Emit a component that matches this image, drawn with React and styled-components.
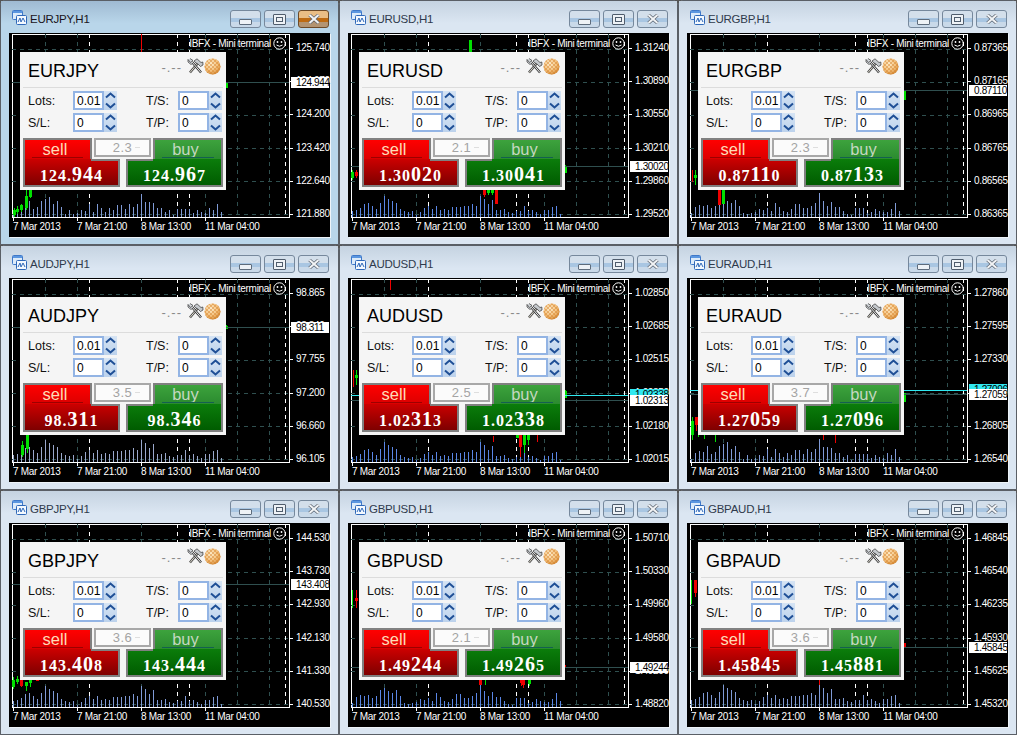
import React from 'react';
import styled, { createGlobalStyle } from 'styled-components';

const GlobalStyle = createGlobalStyle`
  html, body { margin: 0; padding: 0; background: #555; }
  body { font-family: "Liberation Sans", Arial, sans-serif; }
`;

const Desktop = styled.div`
  display: grid;
  grid-template-columns: repeat(3, 339px);
  grid-template-rows: repeat(3, 245px);
  width: 1017px;
  height: 735px;
  overflow: hidden;
`;

const Frame = styled.div`
  display: flex;
  flex-direction: column;
  box-sizing: border-box;
  border: 1px solid #5a5f66;
  border-radius: 5px 5px 0 0;
  padding: 0 8px 7px;
  background: ${p => (p.$active ? '#b9d6ea' : '#dbe6f2')};
`;

const TitleBar = styled.div`
  display: flex;
  align-items: flex-start;
  height: 32px;
  margin: 0 -8px;
  padding: 9px 9px 0 11px;
  box-sizing: border-box;
  background: ${p => (p.$active
    ? 'linear-gradient(#9fbad2, #b9d6ea 70%)'
    : 'linear-gradient(#c5d3e1, #dbe6f2 70%)')};
`;

const TitleText = styled.span`
  margin: 2px 0 0 3px;
  font-size: 11.5px;
  letter-spacing: -0.25px;
  line-height: 14px;
  color: ${p => (p.$active ? '#1a1420' : '#2f3a4c')};
`;

const Buttons = styled.div`
  display: flex;
  gap: 3px;
  margin-left: auto;
`;

const WinButton = styled.div`
  display: flex;
  align-items: center;
  justify-content: center;
  width: 31px;
  height: 18px;
  box-sizing: border-box;
  border: 1px solid #76889c;
  border-radius: 3px;
  background: linear-gradient(#d3dfeb 0 45%, #a9c6e2 45% 70%, #c9d9e9 70%);
`;

const CloseButton = styled(WinButton)`
  border-color: ${p => (p.$active ? '#6d4a28' : '#76889c')};
  background: ${p => (p.$active
    ? 'linear-gradient(#e9bd85 0 45%, #bd6a12 45% 70%, #b39472 70%)'
    : 'linear-gradient(#d3dfeb 0 45%, #a9c6e2 45% 70%, #c9d9e9 70%)')};
`;

const MinGlyph = styled.div`
  width: 11px;
  height: 4px;
  margin-top: 5px;
  border: 1px solid #5e6c7c;
  border-radius: 1px;
  background: #eef2f6;
`;

const MaxGlyph = styled.div`
  display: flex;
  align-items: center;
  justify-content: center;
  width: 11px;
  height: 9px;
  border: 1px solid #4f5c6c;
  border-radius: 1px;
  background: #eef2f6;
  &::after {
    content: '';
    width: 5px;
    height: 3px;
    border: 1px solid #4f5c6c;
  }
`;

const Chart = styled.div`
  flex: 1;
  display: grid;
  grid-template-columns: 278px minmax(0, 1fr);
  grid-template-rows: 184px minmax(0, 1fr);
  padding: 1px 0 0 3px;
  background: #000;
  box-shadow: 1px 1px 0 #eef4f9;
  min-height: 0;
`;

const Plot = styled.div`
  position: relative;
  box-sizing: border-box;
  border: 1px solid #fff;
`;

const PlotSvg = styled.svg`
  position: absolute;
  left: -1px;
  top: -1px;
  display: block;
`;

const Tagline = styled.div`
  position: absolute;
  top: 2px;
  right: 3px;
  display: flex;
  align-items: center;
  gap: 2px;
  font-size: 10px;
  letter-spacing: -0.3px;
  line-height: 12px;
  color: #fff;
`;

const Axis = styled.div`
  position: relative;
  grid-row: 1 / span 2;
  grid-column: 2;
  display: flex;
  flex-direction: column;
  justify-content: space-between;
  padding: 7px 0 16px;
  color: #fff;
  font-size: 10px;
  letter-spacing: -0.35px;
`;

const Tick = styled.div`
  position: relative;
  height: 14px;
  line-height: 14px;
  padding-left: 6px;
  &::before {
    content: '';
    position: absolute;
    left: 0;
    top: 7px;
    width: 3px;
    height: 1px;
    background: #fff;
  }
`;

const PriceTag = styled.div`
  position: absolute;
  left: 1px;
  right: 1px;
  top: ${p => p.$y - 34 - 5}px;
  height: 11px;
  line-height: 11px;
  padding-left: 5px;
  color: #000;
  background: ${p => p.$color};
`;

const TimeRow = styled.div`
  display: flex;
  color: #fff;
  font-size: 10px;
  letter-spacing: -0.3px;
`;

const TimeLabel = styled.div`
  position: relative;
  width: 64px;
  flex: none;
  white-space: nowrap;
  line-height: 14px;
  padding: 2px 0 0 1px;
  box-sizing: border-box;
  &::before {
    content: '';
    position: absolute;
    left: 1px;
    top: 0;
    width: 1px;
    height: 3px;
    background: #fff;
  }
`;

const Panel = styled.div`
  position: absolute;
  left: 7px;
  top: 17px;
  width: 206px;
  height: 138px;
  box-sizing: border-box;
  padding: 0 3px;
  background: #f5f5f5;
  color: #111;
`;

const Header = styled.div`
  display: flex;
  align-items: flex-start;
  height: 36px;
  box-sizing: border-box;
  padding: 6px 2px 0 5px;
  border-bottom: 1px solid #dcdcdc;
`;

const Symbol = styled.div`
  font-size: 18px;
  line-height: 24px;
  margin-top: 1px;
  color: #000;
`;

const Profit = styled.div`
  margin: 3px 5px 0 auto;
  font-size: 13px;
  letter-spacing: 1px;
  line-height: 14px;
  color: #8a8a8a;
`;

const Form = styled.div`
  display: grid;
  grid-template-columns: 45px 44px 29px 32px 44px;
  grid-auto-rows: 19px;
  row-gap: 3px;
  padding: 3px 0 0 5px;
  align-items: center;
  font-size: 12.5px;
`;

const Label = styled.div`
  line-height: 21px;
  height: 19px;
`;

const Field = styled.div`
  display: flex;
  height: 19px;
`;

const Input = styled.div`
  flex: 1;
  box-sizing: border-box;
  border: 2px solid #93b4e4;
  background: #fff;
  font-size: 12px;
  line-height: 16px;
  padding-left: 2px;
  color: #000;
`;

const Spinner = styled.div`
  display: flex;
  flex-direction: column;
  align-items: center;
  justify-content: space-around;
  width: 13px;
  background: linear-gradient(#d6e4f4, #bcd2ec);
`;

const Trade = styled.div`
  display: flex;
  flex-direction: column;
  margin-top: 6px;
`;

const TopRow = styled.div`
  display: flex;
  gap: 2px;
  height: 21px;
`;

const Tab = styled.div`
  position: relative;
  flex: none;
  width: ${p => p.$width}px;
  box-sizing: border-box;
  border: 2px solid #808080;
  border-bottom: 0;
  padding-right: 5px;
  font-size: 16.5px;
  line-height: 18px;
  text-align: center;
  color: ${p => (p.$sell ? '#ffdcb8' : '#c4d8c0')};
  background: ${p => (p.$sell
    ? 'linear-gradient(#ff0000, #dc0000)'
    : 'linear-gradient(#3da33d, #2b8b2f)')};
  &::after {
    content: '';
    position: absolute;
    left: 7px;
    right: 7px;
    bottom: 1px;
    height: 1px;
    background: ${p => (p.$sell ? '#9c0000' : '#136050')};
  }
`;

const Spread = styled.div`
  position: relative;
  flex: 1;
  height: 19px;
  box-sizing: border-box;
  border: 2px solid #a8a8a8;
  background: #fbfbfb;
  font-size: 13px;
  letter-spacing: 0.5px;
  line-height: 15px;
  text-align: center;
  color: #a4a4a4;
  &::after {
    content: '';
    position: absolute;
    right: 9px;
    top: 7px;
    width: 5px;
    height: 1px;
    background: #dedede;
  }
`;

const BottomRow = styled.div`
  display: flex;
  justify-content: space-between;
  height: 28px;
`;

const Quote = styled.div`
  position: relative;
  flex: none;
  width: 97px;
  box-sizing: border-box;
  border: 2px solid #808080;
  border-top: 0;
  display: flex;
  align-items: baseline;
  justify-content: center;
  padding-top: 3px;
  font-family: "Liberation Serif", "Times New Roman", serif;
  font-weight: bold;
  font-size: 16px;
  line-height: 24px;
  letter-spacing: 1px;
  color: #fff;
  background: ${p => (p.$sell
    ? 'linear-gradient(#cc0000, #7e0000)'
    : 'linear-gradient(#0b7d0b, #005c00)')};
  &::before {
    content: '';
    position: absolute;
    top: 0;
    height: 2px;
    background: #808080;
    ${p => (p.$sell ? 'left: 66px; right: -2px;' : 'left: -2px; right: 68px;')}
  }
`;

const Big = styled.span`
  font-size: 20px;
`;

const TIMES = ['7 Mar 2013', '7 Mar 21:00', '8 Mar 13:00', '11 Mar 04:00'];

const BASE_VOLUME = [5, 8, 10, 12, 14, 10, 9, 15, 20, 18, 15, 15, 9, 5, 5, 5, 3, 6, 8, 11, 7, 12, 8, 7, 7, 9, 11, 11, 10, 11, 12, 12, 22, 17, 13, 16, 8, 8, 7, 5, 3, 7, 7, 10, 6, 6, 6, 4, 6, 7, 9, 12, 4, 0];

// candles: x, wick top, wick bottom, body top, body bottom, up
const WINDOWS = [
  { name: 'EURJPY', active: true, spread: '2.3', bid: '124.944', ask: '124.967', ticks: ['125.740', '124.970', '124.200', '123.420', '122.640', '121.880'], y: 82, vol: '#7f9ad6', seed: 0,
    candles: [[14, 208, 217, 210, 215, 1], [17, 206, 214, 209, 212, 1], [21, 204, 212, 205, 210, 1], [26, 190, 210, 196, 208, 1], [30, 190, 198, 190, 197, 1], [141, 34, 52, 34, 34, 0], [226, 83, 88, 83, 88, 1]] },
  { name: 'EURUSD', spread: '2.1', bid: '1.30020', ask: '1.30041', ticks: ['1.31240', '1.30890', '1.30550', '1.30210', '1.29860', '1.29520'], y: 166, vol: '#5a86e6', seed: 1,
    candles: [[13, 170, 180, 172, 178, 1], [17, 170, 178, 172, 176, 0], [131, 40, 52, 40, 52, 1], [145, 190, 197, 190, 195, 0], [149, 190, 195, 190, 193, 1], [153, 190, 195, 190, 193, 1], [157, 190, 204, 190, 204, 0], [226, 165, 173, 166, 173, 1]] },
  { name: 'EURGBP', spread: '2.3', bid: '0.87110', ask: '0.87133', ticks: ['0.87365', '0.87165', '0.86965', '0.86765', '0.86565', '0.86365'], y: 90, vol: '#7f9ad6', seed: 2,
    candles: [[14, 170, 182, 170, 170, 0], [17, 170, 185, 175, 178, 1], [41, 190, 205, 190, 205, 0], [45, 190, 204, 190, 204, 1], [226, 90, 100, 91, 100, 1]] },
  { name: 'AUDJPY', spread: '3.5', bid: '98.311', ask: '98.346', ticks: ['98.865', '98.340', '97.755', '97.200', '96.660', '96.105'], y: 82, vol: '#9aa8cc', seed: 3,
    candles: [[22, 196, 212, 200, 210, 1], [27, 190, 208, 190, 204, 1], [226, 80, 84, 81, 84, 1]] },
  { name: 'AUDUSD', spread: '2.5', bid: '1.02313', ask: '1.02338', ticks: ['1.02850', '1.02685', '1.02515', '1.02350', '1.02180', '1.02015'], y: 155, cyan: 150, cyanLabel: '1.02338', vol: '#5a86e6', seed: 4,
    candles: [[14, 125, 142, 125, 125, 0], [17, 125, 140, 130, 133, 1], [51, 35, 45, 35, 35, 0], [154, 191, 197, 191, 191, 0], [178, 190, 193, 190, 193, 1], [181, 190, 212, 190, 202, 0], [185, 190, 208, 190, 200, 1], [189, 190, 200, 190, 195, 1], [198, 190, 197, 190, 190, 0], [226, 145, 153, 146, 153, 1]] },
  { name: 'EURAUD', spread: '3.7', bid: '1.27059', ask: '1.27096', ticks: ['1.27860', '1.27595', '1.27330', '1.27070', '1.26805', '1.26540'], y: 149, cyan: 145, cyanLabel: '1.27096', vol: '#7f9ad6', seed: 5,
    candles: [[14, 172, 195, 176, 190, 1], [18, 172, 186, 172, 180, 0], [20, 190, 192, 190, 190, 1], [26, 190, 194, 190, 190, 1], [37, 190, 197, 190, 190, 1], [145, 190, 195, 190, 190, 0], [157, 190, 198, 190, 190, 0], [226, 148, 157, 148, 157, 1]] },
  { name: 'GBPJPY', spread: '3.6', bid: '143.408', ask: '143.444', ticks: ['144.530', '143.730', '142.930', '142.130', '141.330', '140.530'], y: 94, vol: '#7f9ad6', seed: 6,
    candles: [[13, 187, 199, 190, 197, 1], [17, 186, 194, 189, 192, 1], [21, 188, 197, 189, 196, 0], [26, 192, 201, 192, 196, 1], [30, 190, 197, 190, 193, 1], [37, 190, 191, 190, 191, 0]] },
  { name: 'GBPUSD', spread: '2.1', bid: '1.49244', ask: '1.49265', ticks: ['1.50710', '1.50330', '1.49960', '1.49580', '1.49200', '1.48820'], y: 177, vol: '#5a86e6', seed: 7,
    candles: [[13, 100, 118, 100, 100, 1], [17, 100, 118, 108, 111, 0], [141, 190, 195, 190, 195, 0], [146, 190, 195, 190, 190, 1], [182, 190, 196, 190, 193, 0], [184, 190, 198, 190, 195, 0], [190, 190, 196, 190, 194, 1], [225, 175, 178, 175, 178, 0]] },
  { name: 'GBPAUD', spread: '3.6', bid: '1.45845', ask: '1.45881', ticks: ['1.46845', '1.46540', '1.46235', '1.45930', '1.45625', '1.45320'], y: 157, vol: '#7f9ad6', seed: 8,
    candles: [[13, 90, 114, 90, 90, 1], [17, 90, 107, 90, 103, 0], [141, 190, 195, 190, 190, 0], [226, 153, 158, 153, 158, 0]] },
];

const GRID_Y = [49, 82, 115, 148, 181, 214];
const GRID_X = [45, 77, 141, 205, 237, 269];
const SEPARATORS = [89, 177, 189, 285];

const jitter = (i, seed) => ((i * 7 + seed * 13 + (i * i) % 5) % 5) - 2;

const TitleIcon = () => (
  <svg width="15" height="15" viewBox="0 0 15 15">
    <rect x="0.5" y="0.5" width="10" height="9" rx="1" fill="#dcebfa" stroke="#3f78c8" />
    <rect x="1" y="1" width="9" height="2" fill="#5a96e0" />
    <rect x="4.5" y="5.5" width="10" height="9" rx="1" fill="#f4f9ff" stroke="#2f68b8" />
    <path d="M6 12 L8 8 L9 12 L11 8 L13 12" fill="none" stroke="#2f68b8" />
  </svg>
);

const CloseGlyph = () => (
  <svg width="14" height="10" viewBox="0 0 14 10">
    <path d="M2.5 1 L11.5 9 M11.5 1 L2.5 9" stroke="#5c6470" strokeWidth="3.4" />
    <path d="M2.5 1 L11.5 9 M11.5 1 L2.5 9" stroke="#f2f4f6" strokeWidth="2" />
  </svg>
);

const Smiley = () => (
  <svg width="13" height="13" viewBox="0 0 13 13">
    <circle cx="6.5" cy="6.5" r="5.7" fill="none" stroke="#fff" />
    <circle cx="4.5" cy="5" r="0.9" fill="#fff" />
    <circle cx="8.5" cy="5" r="0.9" fill="#fff" />
    <path d="M3.5 8 Q6.5 10.5 9.5 8" fill="none" stroke="#fff" />
  </svg>
);

const Tools = () => (
  <svg width="17" height="16" viewBox="0 0 17 16">
    <path d="M3 14.5 L11 5" stroke="#444" strokeWidth="2.4" />
    <path d="M3 14.5 L11 5" stroke="#e0dccf" strokeWidth="1" />
    <path d="M7 3 L10 0.8 L14 4.5 L15.8 4 L16 7 L13.5 8.5 L11 6 L9 5 Z" fill="#c4c8cc" stroke="#333" strokeWidth="0.7" />
    <path d="M14 14.5 L5 4" stroke="#333" strokeWidth="2.4" />
    <path d="M14 14.5 L5 4" stroke="#f0f0f0" strokeWidth="1" />
    <path d="M1 1.5 L3.5 4.5 L6 2.5 L3 0.5 M1 1.5 L1 4 L4 6.5 L6 5" fill="#d4d8dc" stroke="#333" strokeWidth="0.7" />
  </svg>
);

const Ball = ({ id }) => (
  <svg width="17" height="17" viewBox="0 0 17 17">
    <defs>
      <radialGradient id={`ball${id}`} cx="0.4" cy="0.35" r="0.7">
        <stop offset="0" stopColor="#fdeccb" />
        <stop offset="0.6" stopColor="#f3c07c" />
        <stop offset="1" stopColor="#cf8430" />
      </radialGradient>
      <pattern id={`check${id}`} width="4" height="4" patternUnits="userSpaceOnUse">
        <rect width="2" height="2" fill="#d6822a" fillOpacity="0.5" />
        <rect x="2" y="2" width="2" height="2" fill="#d6822a" fillOpacity="0.5" />
      </pattern>
    </defs>
    <circle cx="8.5" cy="8.5" r="8" fill={`url(#ball${id})`} />
    <circle cx="8.5" cy="8.5" r="8" fill={`url(#check${id})`} />
  </svg>
);

const SpinArrow = ({ down }) => (
  <svg width="11" height="7" viewBox="0 0 11 7">
    <path d={down ? 'M1 1.5 L5.5 5.5 L10 1.5' : 'M1 5.5 L5.5 1.5 L10 5.5'} fill="none" stroke="#1f4f96" strokeWidth="2" />
  </svg>
);

const SpinField = ({ value }) => (
  <Field>
    <Input>{value}</Input>
    <Spinner>
      <SpinArrow />
      <SpinArrow down />
    </Spinner>
  </Field>
);

const PriceText = ({ value }) => (
  <>
    {value.slice(0, -3)}
    <Big>{value.slice(-3, -1)}</Big>
    {value.slice(-1)}
  </>
);

const ChartDrawing = ({ win }) => (
  <PlotSvg width="278" height="184" viewBox="12 34 278 184">
    {GRID_Y.map(y => <line key={y} x1="12" x2="289" y1={y + 0.5} y2={y + 0.5} stroke="#2f4f4f" strokeDasharray="4 4" />)}
    {GRID_X.map(x => <line key={x} x1={x + 0.5} x2={x + 0.5} y1="34" y2="217" stroke="#2f4f4f" strokeDasharray="4 4" />)}
    {SEPARATORS.map(x => <line key={x} x1={x + 0.5} x2={x + 0.5} y1="34" y2="217" stroke="#fff" strokeDasharray="4 4" />)}
    {BASE_VOLUME.map((h, i) => (h > 0 ? (
      <line key={i} x1={13.5 + i * 4} x2={13.5 + i * 4} y1="217" y2={217 - Math.max(2, h + jitter(i, win.seed))} stroke={win.vol} />
    ) : null))}
    {win.candles.map(([x, hi, lo, top, bottom, up]) => (
      <g key={`${x}-${hi}`}>
        <line x1={x + 0.5} x2={x + 0.5} y1={hi} y2={lo} stroke={up ? '#00e000' : '#f00000'} />
        <rect x={x - 1} y={top} width="3" height={bottom - top} fill={up ? '#00e000' : '#f00000'} />
      </g>
    ))}
    <line x1="12" x2="289" y1={win.y + 0.5} y2={win.y + 0.5} stroke="#2f4f4f" />
    {win.cyan && <line x1="12" x2="289" y1={win.cyan + 0.5} y2={win.cyan + 0.5} stroke="#30e8f0" />}
  </PlotSvg>
);

const Terminal = ({ win }) => (
  <Frame $active={win.active}>
    <TitleBar $active={win.active}>
      <TitleIcon />
      <TitleText $active={win.active}>{win.name},H1</TitleText>
      <Buttons>
        <WinButton><MinGlyph /></WinButton>
        <WinButton><MaxGlyph /></WinButton>
        <CloseButton $active={win.active}><CloseGlyph /></CloseButton>
      </Buttons>
    </TitleBar>
    <Chart>
      <Plot>
        <ChartDrawing win={win} />
        <Tagline>IBFX - Mini terminal<Smiley /></Tagline>
        <Panel>
          <Header>
            <Symbol>{win.name}</Symbol>
            <Profit>-.--</Profit>
            <Tools />
            <Ball id={win.name} />
          </Header>
          <Form>
            <Label>Lots:</Label>
            <SpinField value="0.01" />
            <span />
            <Label>T/S:</Label>
            <SpinField value="0" />
            <Label>S/L:</Label>
            <SpinField value="0" />
            <span />
            <Label>T/P:</Label>
            <SpinField value="0" />
          </Form>
          <Trade>
            <TopRow>
              <Tab $sell $width={69}>sell</Tab>
              <Spread>{win.spread}</Spread>
              <Tab $width={70}>buy</Tab>
            </TopRow>
            <BottomRow>
              <Quote $sell><PriceText value={win.bid} /></Quote>
              <Quote><PriceText value={win.ask} /></Quote>
            </BottomRow>
          </Trade>
        </Panel>
      </Plot>
      <Axis>
        {win.ticks.map(t => <Tick key={t}>{t}</Tick>)}
        {win.cyan && <PriceTag $y={win.cyan - 1} $color="#30e8f0">{win.cyanLabel}</PriceTag>}
        <PriceTag $y={win.y} $color="#fff">{win.bid}</PriceTag>
      </Axis>
      <TimeRow>
        {TIMES.map(t => <TimeLabel key={t}>{t}</TimeLabel>)}
      </TimeRow>
    </Chart>
  </Frame>
);

const App = () => (
  <>
    <GlobalStyle />
    <Desktop>
      {WINDOWS.map(win => <Terminal key={win.name} win={win} />)}
    </Desktop>
  </>
);

export default App;
